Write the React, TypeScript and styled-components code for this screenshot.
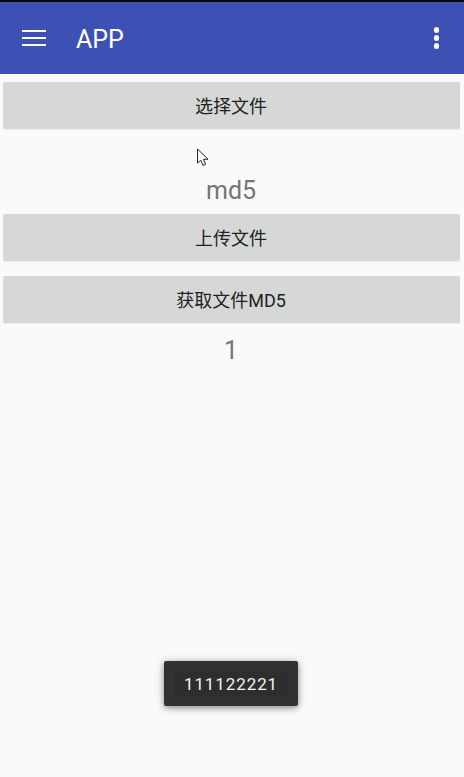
import styled, { createGlobalStyle } from 'styled-components';

const Global = createGlobalStyle`
    html, body {
        margin: 0;
        padding: 0;
        background-color: #fafafa;
    }
    * {
        box-sizing: border-box;
    }
`

const App = () => {
    return <Main>
        <Global />
        <Toolbar>
            <Menu>
                <MenuLine />
                <MenuLine />
                <MenuLine />
            </Menu>
            <Title>APP</Title>
            <More>
                <Dot />
                <Dot />
                <Dot />
            </More>
        </Toolbar>

        <Content>
            <Button>选择文件</Button>
            <Value top={44} bottom={6}>md5</Value>
            <Button>上传文件</Button>
            <Button mt={15}>获取文件MD5</Button>
            <Value top={10}>1</Value>
        </Content>

        <Cursor width="14" height="21" viewBox="0 0 14 21">
            <path d="M1.5 1 L1.5 15 L4.8 12.2 L7 17.5 L9.6 16.3 L7.5 11.4 L12 11.2 Z" fill="#fafafa" stroke="#23232f" strokeWidth="1" strokeLinejoin="round" />
        </Cursor>

        <Toast><ToastText>111122221</ToastText></Toast>
    </Main>;
}

export default App;

const Main = styled.div`
    width: 464px;
    height: 777px;
    position: relative;
    overflow: hidden;
    background-color: #fafafa;
    font-family: Roboto, "Noto Sans CJK SC", sans-serif;
`
const Toolbar = styled.div`
    height: 74px;
    background-color: #3d50b4;
    border-top: 2px solid #08080c;
    display: flex;
    align-items: center;
    padding: 0 17px 0 22px;
`
const Menu = styled.div`
    width: 24px;
    display: flex;
    flex-direction: column;
    gap: 4.5px;
    margin-right: 30px;
`
const MenuLine = styled.div`
    height: 2.5px;
    background-color: #fff;
`
const Title = styled.div`
    flex: 1;
    color: #fff;
    font-size: 25px;
    line-height: 30px;
    padding-top: 3px;
`
const More = styled.div`
    display: flex;
    flex-direction: column;
    gap: 2.5px;
    margin-right: 8px;
`
const Dot = styled.div`
    width: 5.5px;
    height: 5.5px;
    border-radius: 50%;
    background-color: #fff;
`
const Content = styled.div`
    display: flex;
    flex-direction: column;
    padding: 8px 4.5px 0 2.5px;
`
const Button = styled.div<{mt?: number}>`
    height: 47px;
    margin-top: ${({mt}) => mt || 0}px;
    padding-bottom: 2px;
    background-color: #d6d7d7;
    border-radius: 2px;
    box-shadow: 0 1px 1px rgba(0, 0, 0, 0.06);
    color: #222;
    font-size: 18px;
    display: flex;
    align-items: center;
    justify-content: center;
`
const Value = styled.div<{top: number, bottom?: number}>`
    margin-top: ${({top}) => top}px;
    margin-bottom: ${({bottom}) => bottom || 0}px;
    height: 35px;
    line-height: 35px;
    text-align: center;
    color: #757575;
    font-size: 25px;
`
const Cursor = styled.svg`
    position: absolute;
    left: 196px;
    top: 148px;
`
const Toast = styled.div`
    position: absolute;
    left: 164px;
    top: 661px;
    width: 134px;
    height: 45px;
    background-color: #323232;
    border-radius: 2px;
    box-shadow: 0 2px 6px rgba(0, 0, 0, 0.4), 0 0 12px rgba(0, 0, 0, 0.12);
    display: flex;
    align-items: center;
    justify-content: center;
`
const ToastText = styled.div`
    padding: 0 10px;
    background-color: #2e2e2e;
    color: #f2f2f2;
    font-size: 17px;
    line-height: 24px;
    letter-spacing: 0.9px;
`
